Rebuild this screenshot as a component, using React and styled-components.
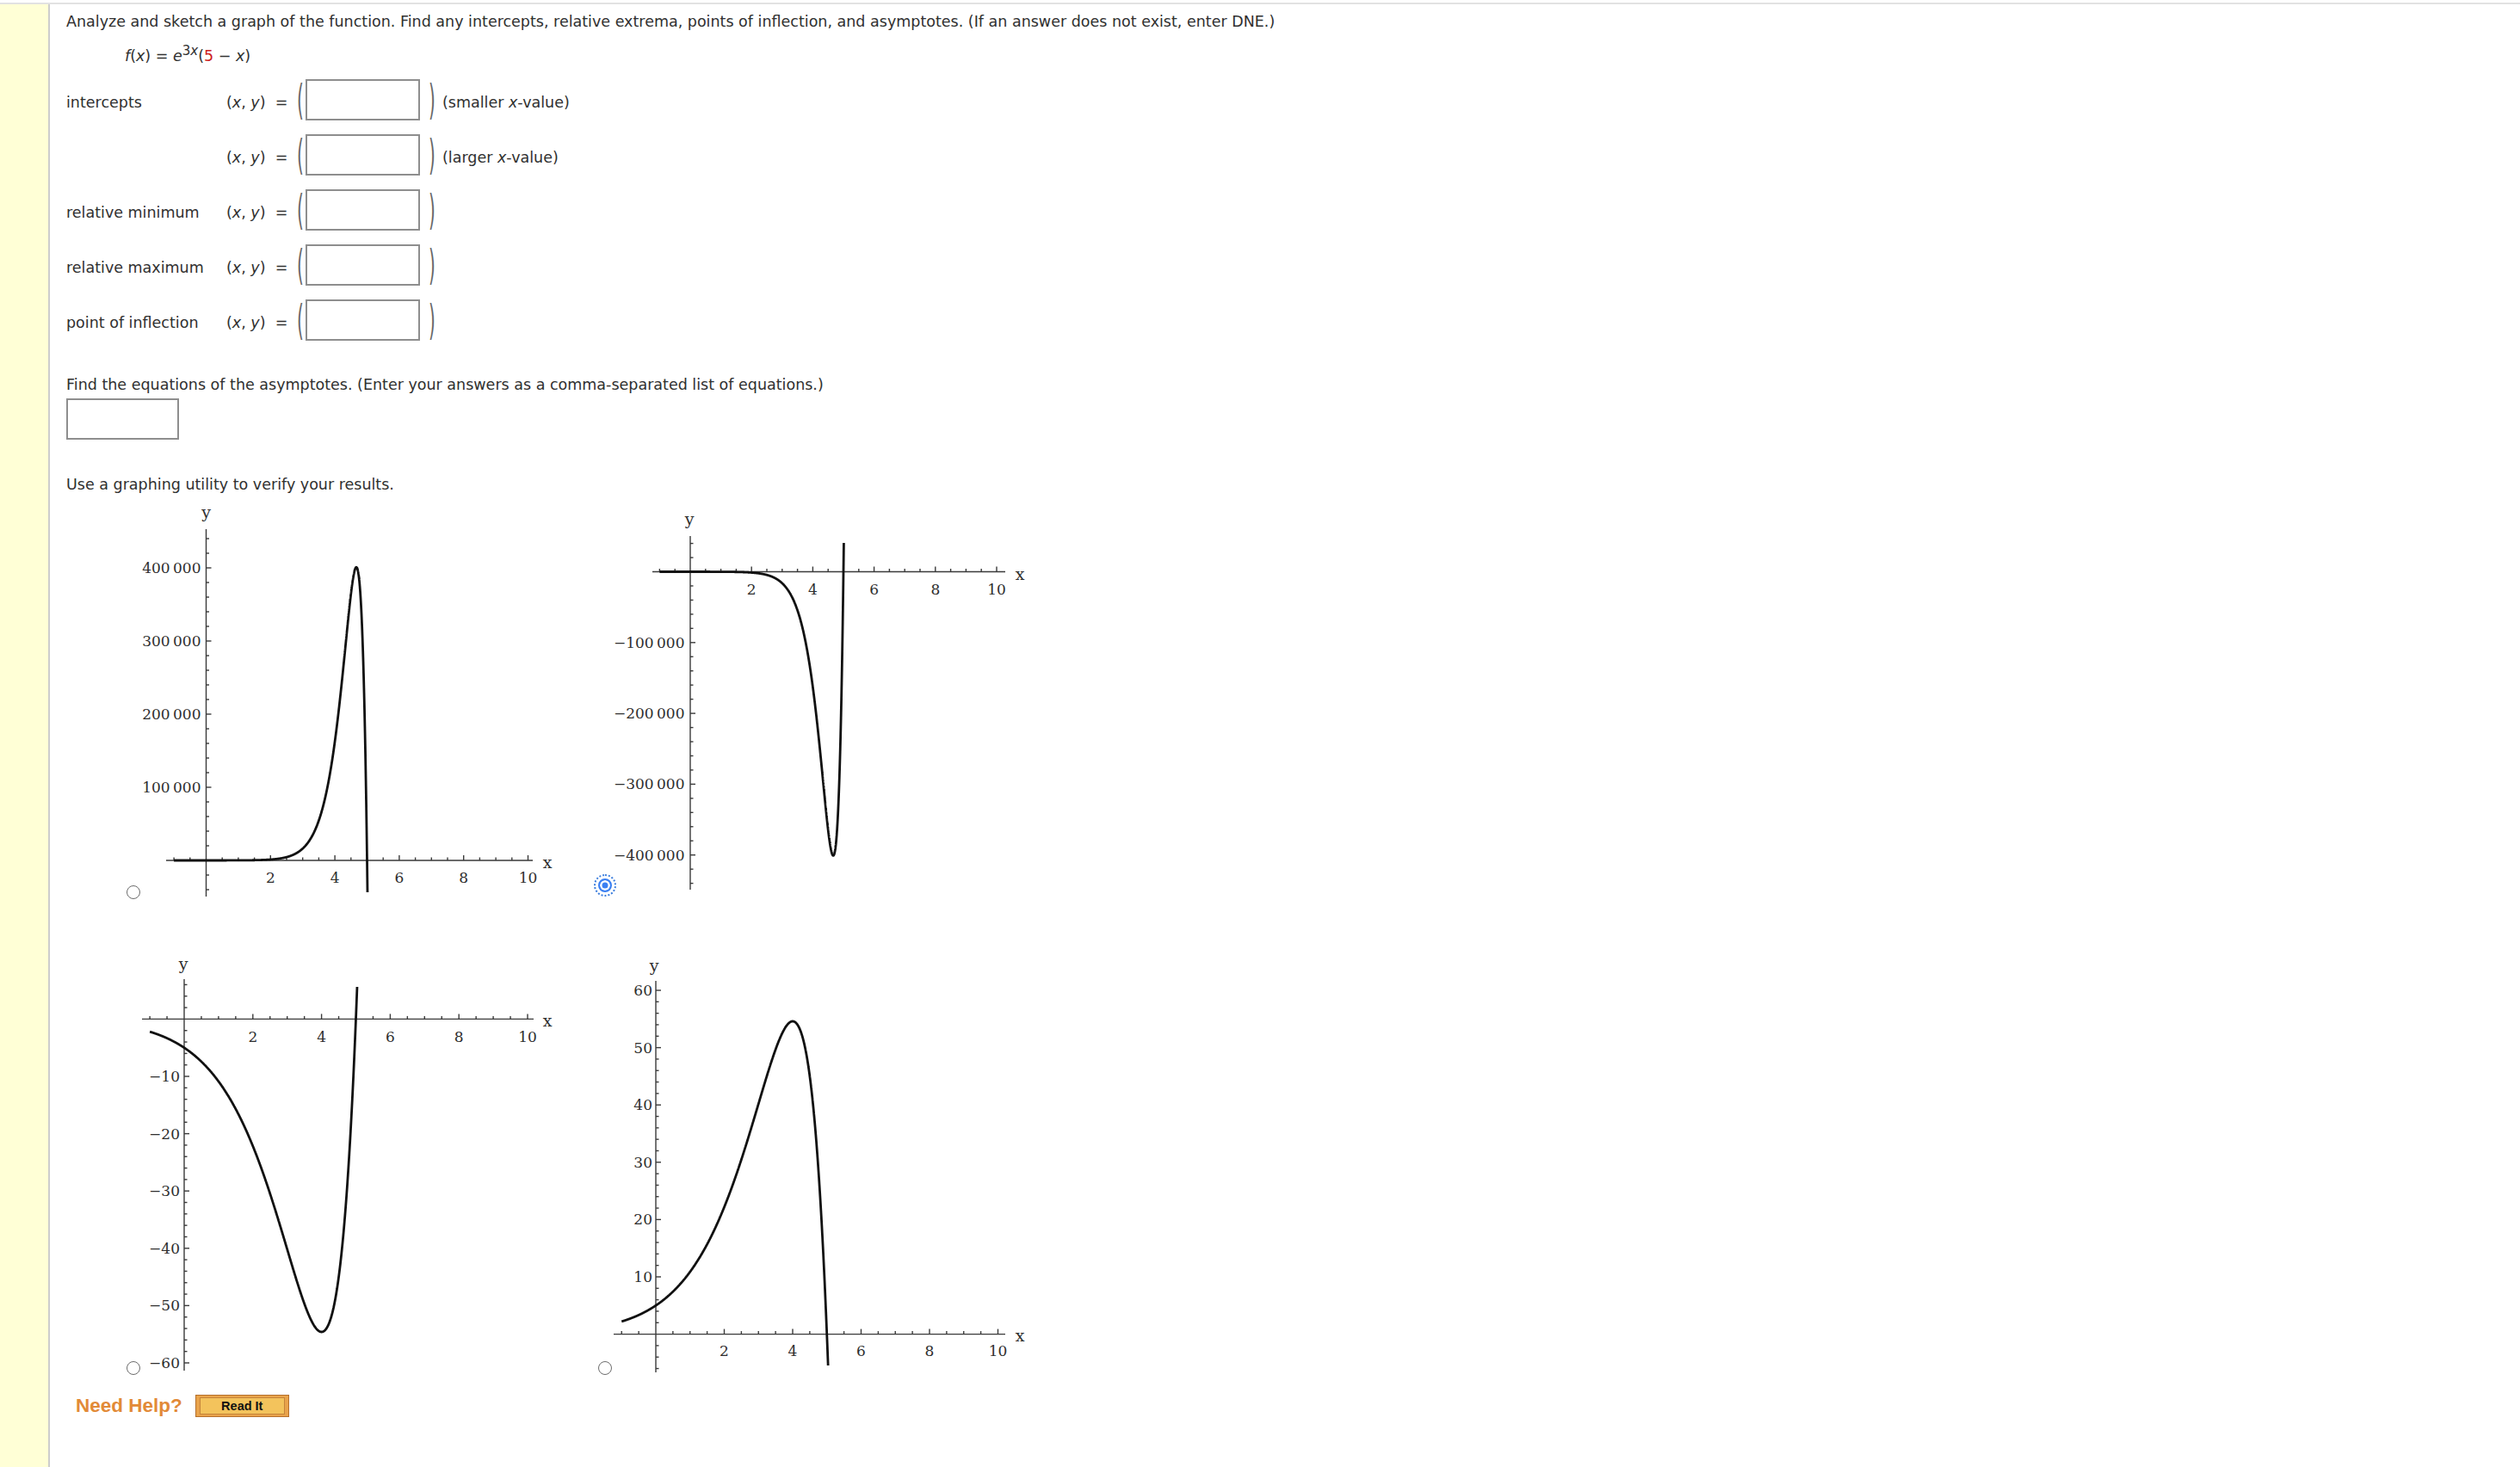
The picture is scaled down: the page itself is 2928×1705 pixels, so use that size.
import React from "react";
import styled, { createGlobalStyle, css } from "styled-components";

const GlobalStyle = createGlobalStyle`
  html, body {
    margin: 0;
    padding: 0;
    background: #fff;
  }
  body {
    font-family: "DejaVu Sans", Verdana, sans-serif;
    color: #303030;
  }
`;

const Page = styled.div`
  height: 1705px;
  padding-top: 3px;
  box-sizing: border-box;
  display: flex;
  flex-direction: column;
`;

const TopRule = styled.div`
  height: 2px;
  background: #e2e2e2;
  flex: none;
`;

const Body = styled.div`
  flex: 1;
  display: flex;
`;

const Sidebar = styled.div`
  width: 56px;
  flex: none;
  background: #ffffd6;
  border-right: 2px solid #cdcdcd;
`;

const Main = styled.div`
  flex: 1;
  padding-left: 19px;
`;

const Prompt = styled.p`
  margin: ${({ $mt }) => $mt}px 0 0;
  font-size: 17.5px;
  line-height: 24px;
  white-space: nowrap;
`;

const Formula = styled(Prompt)`
  padding-left: 68px;
  sup {
    font-size: 15px;
    line-height: 0;
    vertical-align: 7px;
  }
`;

const Red = styled.span`
  color: #cc2020;
`;

const AnswerRow = styled.div`
  display: flex;
  align-items: center;
  height: 48px;
  margin-top: ${({ $mt }) => $mt}px;
  font-size: 17.5px;
  white-space: nowrap;
`;

const RowText = styled.span`
  padding-top: 5px;
  flex: none;
  width: ${({ $w }) => ($w ? `${$w}px` : "auto")};
  margin-left: ${({ $ml }) => $ml || 0}px;
`;

const Paren = styled.span`
  display: inline-block;
  width: 12px;
  flex: none;
  text-align: center;
  font-size: 20px;
  line-height: 20px;
  color: #666;
  transform: scaleY(2.4);
  margin-left: ${({ $ml }) => $ml || 0}px;
`;

const InputBox = styled.span`
  display: block;
  flex: none;
  width: ${({ $w }) => $w}px;
  height: 48px;
  box-sizing: border-box;
  border: 2px solid #8e8e8e;
  background: #fff;
  margin-top: ${({ $mt }) => $mt || 0}px;
`;

const GraphGrid = styled.div`
  display: grid;
  grid-template-columns: 521px 517px;
  grid-template-rows: 470px 510px;
  column-gap: 27px;
  row-gap: 50px;
  margin-left: 70px;
`;

const Cell = styled.div`
  display: flex;
  align-items: flex-end;
  gap: ${({ $gap }) => $gap}px;
`;

const Radio = styled.span`
  display: block;
  width: 16px;
  height: 16px;
  flex: none;
  box-sizing: border-box;
  border-radius: 50%;
  border: 1.5px solid #6c6c6c;
  background: #fff;
  margin-bottom: ${({ $mb }) => $mb}px;
  ${({ $checked }) =>
    $checked &&
    css`
      border: 2px solid #3b80f2;
      background: #3b80f2;
      box-shadow: inset 0 0 0 2.5px #fff;
      outline: 2px dotted #3b7ddd;
      outline-offset: 3px;
    `}
`;

const Plot = styled.svg`
  display: block;
  flex: none;
  overflow: visible;
`;

const Axis = styled.line`
  stroke: #3a3a3a;
  stroke-width: 1.4;
`;

const Curve = styled.path`
  fill: none;
  stroke: #111;
  stroke-width: 2.8;
  stroke-linejoin: round;
`;

const TickLabel = styled.text`
  font-family: "DejaVu Serif", "Liberation Serif", serif;
  font-size: 17px;
  fill: #2e2e2e;
`;

const AxisName = styled(TickLabel)`
  font-size: 19px;
`;

const HelpRow = styled.div`
  display: flex;
  align-items: center;
  height: 28px;
  margin-top: 15px;
  padding-left: 11px;
  gap: 15px;
`;

const NeedHelp = styled.span`
  font-family: "Liberation Sans", Arial, sans-serif;
  font-weight: 700;
  font-size: 22.5px;
  color: #e28a37;
`;

const ReadIt = styled.button`
  width: 109px;
  height: 26px;
  padding: 2px 4px;
  box-sizing: border-box;
  border: 1px solid #b5702c;
  background: #e9a34b;
  cursor: pointer;
  display: flex;

  span {
    flex: 1;
    display: flex;
    align-items: center;
    justify-content: center;
    border: 1px solid #c5843a;
    background: #f3c35c;
    font-family: "Liberation Sans", Arial, sans-serif;
    font-weight: 700;
    font-size: 14.5px;
    color: #111;
  }
`;

const fmt = (v) => {
  const s = String(Math.abs(v));
  const grouped = s.length > 4 ? s.replace(/\B(?=(\d{3})+(?!\d))/g, "\u2009") : s;
  return (v < 0 ? "\u2212" : "") + grouped;
};

const Graph = ({ g }) => {
  const { w, h, ox, oy, sx, sy, xAx, yAx, yStep, yMinor, f, clip, yLab, xLab, xTickY, gap } = g;
  const px = (x) => ox + x * sx;
  const py = (y) => oy - y * sy;

  // sample the curve from x = -1 until it leaves the plot box
  const pts = [];
  let prev = null;
  for (let i = 0; i <= 7000; i++) {
    const x = -1 + i * 0.001;
    const X = px(x);
    const Y = py(f(x));
    if (Y < clip[0] || Y > clip[1]) {
      if (prev) {
        const b = Y < clip[0] ? clip[0] : clip[1];
        const t = (b - prev[1]) / (Y - prev[1]);
        pts.push([prev[0] + t * (X - prev[0]), b]);
      }
      break;
    }
    prev = [X, Y];
    if (i % 4 === 0 || x > 4.3) pts.push(prev);
  }
  const d = pts.map((p, i) => (i ? "L" : "M") + p[0].toFixed(2) + " " + p[1].toFixed(2)).join("");

  const xTicks = [];
  for (let k = -3; k <= 21; k++) {
    const p = px(k / 2);
    if (k === 0 || p < xAx[0] || p > xAx[1]) continue;
    const len = k % 4 === 0 ? 6 : 3.5;
    xTicks.push(<Axis key={"xt" + k} x1={p} y1={oy} x2={p} y2={oy - len} />);
  }

  const yTicks = [];
  const yLabels = [];
  const ratio = yStep / yMinor;
  const nFrom = Math.ceil((oy - yAx[1]) / sy / yMinor);
  const nTo = Math.floor((oy - yAx[0]) / sy / yMinor);
  for (let n = nFrom; n <= nTo; n++) {
    if (n === 0) continue;
    const v = n * yMinor;
    const p = py(v);
    const major = n % ratio === 0;
    yTicks.push(<Axis key={"yt" + n} x1={ox} y1={p} x2={ox + (major ? 6 : 3.5)} y2={p} />);
    if (major)
      yLabels.push(
        <TickLabel key={"yl" + n} x={ox - gap} y={p} textAnchor="end" dominantBaseline="central">
          {fmt(v)}
        </TickLabel>
      );
  }

  return (
    <Plot width={w} height={h} viewBox={`0 0 ${w} ${h}`}>
      <Axis x1={xAx[0]} y1={oy} x2={xAx[1]} y2={oy} />
      <Axis x1={ox} y1={yAx[0]} x2={ox} y2={yAx[1]} />
      {xTicks}
      {yTicks}
      {[2, 4, 6, 8, 10].map((v) => (
        <TickLabel key={v} x={px(v)} y={xTickY} textAnchor="middle" dominantBaseline="central">
          {v}
        </TickLabel>
      ))}
      {yLabels}
      <AxisName x={yLab[0]} y={yLab[1]} textAnchor="middle" dominantBaseline="central">
        y
      </AxisName>
      <AxisName x={xLab[0]} y={xLab[1]} textAnchor="middle" dominantBaseline="central">
        x
      </AxisName>
      <Curve d={d} />
    </Plot>
  );
};

const f = (x) => Math.exp(3 * x) * (5 - x);

const graphs = [
  {
    w: 500, h: 470, ox: 71.5, oy: 425, sx: 37.4, sy: 85 / 1e5,
    xAx: [25, 451], yAx: [40, 467], yStep: 1e5, yMinor: 2e4,
    f, clip: [40, 462], yLab: [71.5, 20], xLab: [468, 427], xTickY: 445, gap: 6,
    gapCell: 5, mb: 0,
  },
  {
    w: 500, h: 470, ox: 90, oy: 89.5, sx: 35.6, sy: 82.3 / 1e5,
    xAx: [46, 456], yAx: [48, 459], yStep: 1e5, yMinor: 2e4,
    f: (x) => -f(x), clip: [56, 459], yLab: [89, 28], xLab: [473, 92], xTickY: 110, gap: 6.5,
    gapCell: 1, mb: 8, checked: true,
  },
  {
    w: 500, h: 510, ox: 46, oy: 89.4, sx: 39.9, sy: 6.66,
    xAx: [-3, 452], yAx: [43, 498], yStep: 10, yMinor: 2,
    f: (x) => Math.exp(x) * (x - 5), clip: [52, 498], yLab: [45, 25], xLab: [468, 91], xTickY: 110, gap: 5,
    gapCell: 5, mb: 7,
  },
  {
    w: 500, h: 510, ox: 50, oy: 455.6, sx: 39.75, sy: 6.66,
    xAx: [1, 456], yAx: [45, 500], yStep: 10, yMinor: 2,
    f: (x) => Math.exp(x) * (5 - x), clip: [45, 492], yLab: [48, 27], xLab: [473, 457], xTickY: 475, gap: 4,
    gapCell: 1, mb: 7,
  },
];

const rows = [
  { label: "intercepts", note: <>(smaller <i>x</i>-value)</>, mt: 15 },
  { label: "", note: <>(larger <i>x</i>-value)</>, mt: 16 },
  { label: "relative minimum", mt: 16 },
  { label: "relative maximum", mt: 16 },
  { label: "point of inflection", mt: 16 },
];

export default function App() {
  return (
    <>
      <GlobalStyle />
      <Page>
        <TopRule />
        <Body>
          <Sidebar />
          <Main>
            <Prompt $mt={8}>
              Analyze and sketch a graph of the function. Find any intercepts, relative extrema, points of
              inflection, and asymptotes. (If an answer does not exist, enter DNE.)
            </Prompt>
            <Formula $mt={16}>
              <i>f</i>(<i>x</i>) = <i>e</i>
              <sup>
                3<i>x</i>
              </sup>
              (<Red>5</Red> − <i>x</i>)
            </Formula>
            {rows.map((r, i) => (
              <AnswerRow key={i} $mt={r.mt}>
                <RowText $w={186}>{r.label}</RowText>
                <RowText $w={80}>
                  (<i>x</i>, <i>y</i>) &nbsp;=
                </RowText>
                <Paren>(</Paren>
                <InputBox $w={133} />
                <Paren $ml={8}>)</Paren>
                {r.note && <RowText $ml={6}>{r.note}</RowText>}
              </AnswerRow>
            ))}
            <Prompt $mt={39}>
              Find the equations of the asymptotes. (Enter your answers as a comma-separated list of
              equations.)
            </Prompt>
            <InputBox $w={131} $mt={4} />
            <Prompt $mt={40}>Use a graphing utility to verify your results.</Prompt>
            <GraphGrid>
              {graphs.map((g, i) => (
                <Cell key={i} $gap={g.gapCell}>
                  <Radio $mb={g.mb} $checked={g.checked} />
                  <Graph g={g} />
                </Cell>
              ))}
            </GraphGrid>
            <HelpRow>
              <NeedHelp>Need Help?</NeedHelp>
              <ReadIt>
                <span>Read It</span>
              </ReadIt>
            </HelpRow>
          </Main>
        </Body>
      </Page>
    </>
  );
}
